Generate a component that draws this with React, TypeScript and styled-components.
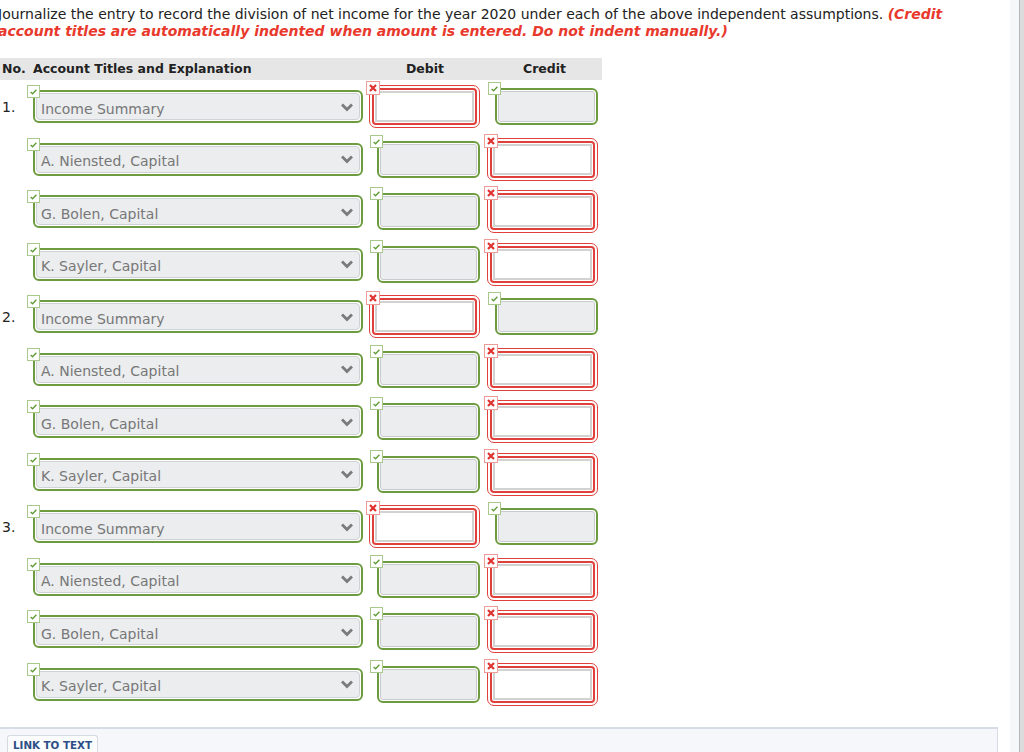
import React from 'react'
import styled, { createGlobalStyle } from 'styled-components'

type Mark = 'ok' | 'bad'

interface Line {
  no?: string
  account: string
  debit: Mark
  credit: Mark
}

const GlobalStyle = createGlobalStyle`
  html, body {
    margin: 0;
    padding: 0;
    background: #fff;
    overflow: hidden;
  }
  body {
    font-family: "DejaVu Sans", Verdana, sans-serif;
    color: #222;
  }
`

const group = (no: string): Line[] => [
  { no, account: 'Income Summary', debit: 'bad', credit: 'ok' },
  { account: 'A. Niensted, Capital', debit: 'ok', credit: 'bad' },
  { account: 'G. Bolen, Capital', debit: 'ok', credit: 'bad' },
  { account: 'K. Sayler, Capital', debit: 'ok', credit: 'bad' },
]

const lines: Line[] = [...group('1.'), ...group('2.'), ...group('3.')]

const MarkIcon = ({ kind }: { kind: Mark }) =>
  kind === 'ok' ? (
    <svg width="13" height="13" viewBox="0 0 13 13">
      <rect x="0.5" y="0.5" width="12" height="12" fill="#fff" stroke="#a9c98c" />
      <path d="M3.6 7 L5.6 8.8 L9.4 4.8" fill="none" stroke="#5f9a36" strokeWidth="1.3" />
    </svg>
  ) : (
    <svg width="14" height="14" viewBox="0 0 14 14">
      <rect x="0.5" y="0.5" width="13" height="13" fill="#fff" stroke="#ef9b98" />
      <path d="M4 4 L10 10 M10 4 L4 10" fill="none" stroke="#e0322f" strokeWidth="2.2" />
    </svg>
  )

const Chevron = () => (
  <svg width="14" height="10" viewBox="0 0 14 10">
    <path d="M2 2.5 L7 7.5 L12 2.5" fill="none" stroke="#7b7b7b" strokeWidth="2.8" />
  </svg>
)

const AmountField = ({ kind }: { kind: Mark }) =>
  kind === 'ok' ? (
    <GreenBox>
      <MarkSpot $top={-8} $left={-9}>
        <MarkIcon kind="ok" />
      </MarkSpot>
      <FilledInput />
    </GreenBox>
  ) : (
    <RedOuter>
      <MarkSpot $top={-5} $left={-4}>
        <MarkIcon kind="bad" />
      </MarkSpot>
      <RedInner>
        <BlankInput />
      </RedInner>
    </RedOuter>
  )

const App = () => {
  return (
    <>
      <GlobalStyle />
      <Frame>
        <Content>
          <Instructions>
            Journalize the entry to record the division of net income for the year 2020 under
            each of the above independent assumptions.{' '}
            <Hint>
              (Credit account titles are automatically indented when amount is entered. Do not
              indent manually.)
            </Hint>
          </Instructions>

          <Journal>
            <HeadCell>No.</HeadCell>
            <HeadCell>Account Titles and Explanation</HeadCell>
            <HeadCell $center>Debit</HeadCell>
            <HeadCell $center>Credit</HeadCell>

            {lines.map((line, i) => (
              <React.Fragment key={i}>
                <RowNo>{line.no}</RowNo>
                <SelectCell>
                  <AccountSelect>
                    <MarkSpot $top={-7} $left={-8}>
                      <MarkIcon kind="ok" />
                    </MarkSpot>
                    <SelectInner>
                      <AccountName>{line.account}</AccountName>
                      <Chevron />
                    </SelectInner>
                  </AccountSelect>
                </SelectCell>
                <AmountCell>
                  <AmountField kind={line.debit} />
                </AmountCell>
                <AmountCell>
                  <AmountField kind={line.credit} />
                </AmountCell>
              </React.Fragment>
            ))}
          </Journal>

          <BottomPanel>
            <LinkTab>LINK TO TEXT</LinkTab>
          </BottomPanel>
        </Content>
        <RailGap />
        <RailLine />
        <RailEdge />
      </Frame>
    </>
  )
}

const Frame = styled.div`
  display: flex;
  width: 1024px;
  height: 752px;
  overflow: hidden;
`

const Content = styled.div`
  width: 1010px;
  flex: none;
  display: flex;
  flex-direction: column;
`

const RailGap = styled.div`
  width: 9px;
  background: #f6f7f9;
`

const RailLine = styled.div`
  width: 1px;
  background: #b8b8b8;
`

const RailEdge = styled.div`
  flex: 1;
  background: #dcdcdc;
`

const Instructions = styled.p`
  margin: 6px 0 0 -2px;
  max-width: 955px;
  font-size: 14px;
  line-height: 17px;
  color: #222;
`

const Hint = styled.em`
  color: #e8392c;
  font-weight: bold;
`

const Journal = styled.div`
  margin-top: 18px;
  width: 602px;
  display: grid;
  grid-template-columns: 33px 330px 117px 118px 4px;
  grid-auto-rows: 52.5px;
  grid-template-rows: 22px;

  & > :nth-child(4) {
    grid-column: 4 / span 2;
  }
`

const HeadCell = styled.div<{ $center?: boolean }>`
  background: #e6e6e6;
  font-size: 12.5px;
  font-weight: bold;
  line-height: 22px;
  padding-left: ${(p) => (p.$center ? '7px' : '0')};
  text-align: ${(p) => (p.$center ? 'center' : 'left')};
  white-space: nowrap;
  &:first-child {
    padding-left: 2px;
  }
`

const RowNo = styled.div`
  grid-column: 1;
  padding-left: 2px;
  font-size: 14px;
  display: flex;
  align-items: center;
  margin-top: 1px;
`

const SelectCell = styled.div`
  grid-column: 2;
  display: flex;
  align-items: center;
  margin-top: 1px;
`

const AmountCell = styled.div`
  display: flex;
  align-items: center;
  justify-content: flex-end;
  margin-top: 1px;
`

const MarkSpot = styled.span<{ $top: number; $left: number }>`
  position: absolute;
  top: ${(p) => p.$top}px;
  left: ${(p) => p.$left}px;
  display: flex;
  z-index: 1;
`

const AccountSelect = styled.div`
  position: relative;
  box-sizing: border-box;
  width: 330px;
  height: 33px;
  border: 2px solid #6d9b3f;
  border-radius: 6px;
  padding: 1px;
  background: #fff;
`

const SelectInner = styled.div`
  box-sizing: border-box;
  height: 100%;
  border: 1px solid #cfd2d6;
  border-radius: 4px;
  background: #ebedef;
  display: flex;
  align-items: center;
  justify-content: space-between;
  padding: 0 5px 0 4px;
  font-size: 14px;
  color: #777;
`

const AccountName = styled.span`
  padding-top: 4px;
`

const GreenBox = styled.div`
  position: relative;
  box-sizing: border-box;
  width: 103px;
  height: 37px;
  border: 2px solid #6d9b3f;
  border-radius: 6px;
  padding: 1px;
  background: #fff;
`

const FilledInput = styled.div`
  box-sizing: border-box;
  height: 100%;
  border: 1px solid #c9cbce;
  border-radius: 3px;
  background: #ebedef;
`

const RedOuter = styled.div`
  position: relative;
  box-sizing: border-box;
  width: 111px;
  height: 43px;
  border: 1.5px solid #e0403b;
  border-radius: 7px;
  padding: 2px;
  background: #fff;
`

const RedInner = styled.div`
  box-sizing: border-box;
  height: 100%;
  border: 2px solid #e0403b;
  border-radius: 4px;
  padding: 1px;
  background: #fff;
`

const BlankInput = styled.div`
  box-sizing: border-box;
  height: 100%;
  border: 2px solid #d2d2d2;
  background: #fff;
`

const BottomPanel = styled.div`
  margin-top: 17px;
  width: 998px;
  flex: 1;
  box-sizing: border-box;
  border-top: 2px solid #d5dce5;
  border-right: 1px solid #d5dce5;
  background: #f5f7fa;
  padding: 6px 0 0 7px;
`

const LinkTab = styled.button`
  display: block;
  font-family: "DejaVu Sans", Verdana, sans-serif;
  font-size: 10.3px;
  line-height: 12px;
  font-weight: bold;
  color: #2d4e86;
  background: #fbfcfd;
  border: 1px solid #d6dbe2;
  border-bottom: none;
  border-radius: 3px 3px 0 0;
  padding: 3px 5px 6px;
`

export default App
